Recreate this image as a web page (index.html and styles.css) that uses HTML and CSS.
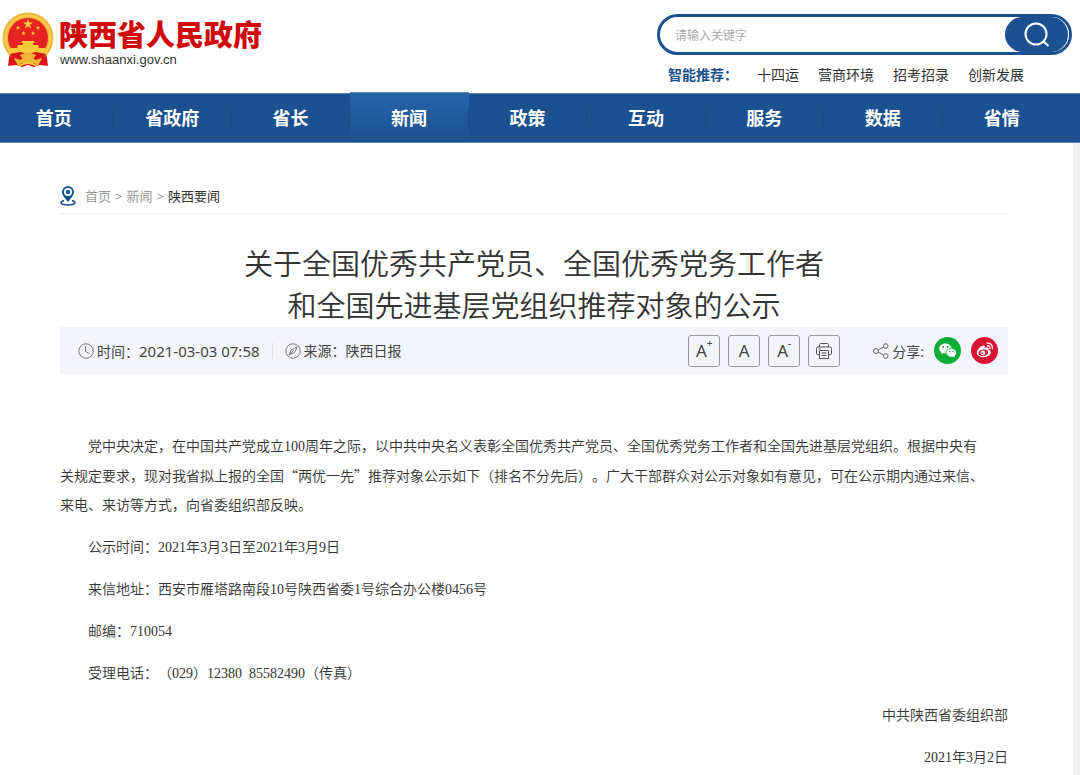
FILE: index.html
```html
<!DOCTYPE html>
<html lang="zh-CN">
<head>
    <meta charset="UTF-8">
    <meta name="viewport" content="width=device-width, initial-scale=1.0">
    <title>关于全国优秀共产党员、全国优秀党务工作者和全国先进基层党组织推荐对象的公示</title>
    <link rel="stylesheet" href="styles.css">
</head>
<body>
    <header class="header">
        <a class="logo" href="#">
            <svg class="emblem" viewBox="0 0 52 56" aria-hidden="true">
                <path d="M8 38 L6 54 L14 53 L20 55 L26 53 L32 55 L38 53 L46 54 L44 38 Z" fill="#d8151b"/>
                <circle cx="26" cy="26" r="25.500" fill="#f0b436"/>
                <circle cx="26" cy="26" r="22.500" fill="none" stroke="#f8cf50" stroke-width="2"/>
                <circle cx="26" cy="26" r="20" fill="#e5231f"/>
                <path d="M26 7 l1.300 3.400 3.700 .1 -2.900 2.300 1 3.600 -3.100 -2.100 -3.100 2.100 1 -3.600 -2.900 -2.300 3.700 -.1z" fill="#f8c93b"/>
                <path d="M16 13.500l.6 1.500 1.600.1-1.200 1 .4 1.600-1.400-.9-1.400.9.4-1.600-1.200-1 1.600-.1zM36 13.500l.6 1.500 1.600.1-1.200 1 .4 1.600-1.400-.9-1.400.9.4-1.600-1.200-1 1.600-.1zM21.500 19l.6 1.500 1.600.1-1.200 1 .4 1.600-1.400-.9-1.400.9.4-1.600-1.200-1 1.600-.1zM31 19l.6 1.500 1.600.1-1.200 1 .4 1.600-1.400-.9-1.400.9.4-1.600-1.200-1 1.600-.1z" fill="#f8c93b"/>
                <path d="M20 29h12l1 2h-2v2h5l1 3H15l1-3h5v-2h-2z" fill="#f8c93b"/>
                <path d="M8 36h36l-4 7H12z" fill="#f8c93b"/>
                <path d="M8 42l10-2 8 2 8-2 10 2-2 5-8 1-8-3-8 3-8-1z" fill="#d8151b"/>
                <path d="M18 43l8-3 8 3-4 6h-8z" fill="#f0b436"/>
                <path d="M12 46l10 3-6 5zM40 46l-10 3 6 5z" fill="#f0b436"/>
                <path d="M17 54q9-6 18 0" fill="none" stroke="#f8c93b" stroke-width="2"/>
            </svg>
            <span class="logo-text">
                <strong>陕西省人民政府</strong>
                <span class="domain">www.shaanxi.gov.cn</span>
            </span>
        </a>
        <div class="header-right">
            <form class="search">
                <input type="text" placeholder="请输入关键字" aria-label="搜索">
                <button type="button" aria-label="搜索">
                    <svg width="26" height="26" viewBox="0 0 26 26" fill="none" stroke="#fff" stroke-width="2">
                        <circle cx="12" cy="12" r="10.500"/>
                        <path d="M19 19l5.500 5"/>
                    </svg>
                </button>
            </form>
            <div class="hot">
                <strong>智能推荐：</strong>
                <a href="#">十四运</a>
                <a href="#">营商环境</a>
                <a href="#">招考招录</a>
                <a href="#">创新发展</a>
            </div>
        </div>
    </header>

    <nav class="nav">
        <ul>
            <li><a href="#">首页</a></li>
            <li><a href="#">省政府</a></li>
            <li><a href="#">省长</a></li>
            <li class="active"><a href="#">新闻</a></li>
            <li><a href="#">政策</a></li>
            <li><a href="#">互动</a></li>
            <li><a href="#">服务</a></li>
            <li><a href="#">数据</a></li>
            <li><a href="#">省情</a></li>
        </ul>
    </nav>

    <main class="main">
        <div class="crumbs">
            <svg width="16" height="20" viewBox="0 0 16 20" aria-hidden="true">
                <path d="M4 14.500C2 15 1 15.800 1 16.600 1 18 4 19 8 19s7-1 7-2.400c0-.8-1-1.600-3-2.100" fill="none" stroke="#1b5190" stroke-width="1.600"/>
                <path d="M8 0a6 6 0 0 0-6 6c0 3 2.500 5.500 6 10 3.500-4.500 6-7 6-10a6 6 0 0 0-6-6z" fill="#1b5190"/>
                <circle cx="8" cy="6" r="4" fill="#fff"/>
                <circle cx="8" cy="6" r="2.200" fill="#1b5190"/>
            </svg>
            <a href="#">首页</a>
            <span>&gt;</span>
            <a href="#">新闻</a>
            <span>&gt;</span>
            <a class="current" href="#">陕西要闻</a>
        </div>

        <h1>关于全国优秀共产党员、全国优秀党务工作者<br>和全国先进基层党组织推荐对象的公示</h1>

        <div class="info">
            <div class="info-item">
                <svg width="16" height="16" viewBox="0 0 16 16" fill="none" stroke="#777" aria-hidden="true">
                    <circle cx="8" cy="8" r="7.200"/>
                    <path d="M7.500 3v5.500l4 2"/>
                </svg>
                <span>时间：<time>2021-03-03 07:58</time></span>
            </div>
            <div class="info-item source">
                <svg width="16" height="16" viewBox="0 0 16 16" fill="none" stroke="#777" aria-hidden="true">
                    <circle cx="8" cy="8" r="7.200"/>
                    <path d="M12 4L6 7l-2 5 6-3zM4 12l5-5"/>
                </svg>
                <span>来源：陕西日报</span>
            </div>
            <div class="tools">
                <button type="button" aria-label="放大字体">A<sup>+</sup></button>
                <button type="button" aria-label="默认字体">A</button>
                <button type="button" aria-label="缩小字体">A<sup>-</sup></button>
                <button type="button" aria-label="打印">
                    <svg width="16" height="16" viewBox="0 0 16 16" fill="none" stroke="#555">
                        <path d="M3.500 4V1.500Q3.500.5 4.500.5h7q1 0 1 1V4M3.500 11.500h-2q-1 0-1-1v-5q0-1.500 1.500-1.500h12q1.500 0 1.500 1.500v5q0 1-1 1h-2"/>
                        <path d="M3.500 7.500h9v8h-9zM5.500 10h5M5.500 12.500h5M2.500 6h2"/>
                    </svg>
                </button>
            </div>
            <div class="share">
                <svg width="16" height="16" viewBox="0 0 16 16" fill="none" stroke="#666" aria-hidden="true">
                    <circle cx="3" cy="8" r="2.500"/>
                    <circle cx="12.800" cy="3" r="2.300"/>
                    <circle cx="12.800" cy="13" r="2.300"/>
                    <path d="M5.300 6.800l5.400-2.800M5.300 9.200l5.400 2.800"/>
                </svg>
                <span>分享:</span>
                <a href="#" aria-label="微信">
                    <svg width="27" height="27" viewBox="0 0 27 27">
                        <circle cx="13.500" cy="13.500" r="13.500" fill="#0cae35"/>
                        <path d="M11.500 6.500c-3.600 0-6.300 2.200-6.300 5 0 1.600.9 3 2.300 3.900L7 17.300l2.300-1.200c.8.2 1.500.3 2.300.3 0-3.200 2.600-5.200 6-5.200-.5-2.700-3-4.700-6.100-4.700z" fill="#fff"/>
                        <path d="M22.300 15.700c0-2.200-2.200-4-4.900-4s-4.900 1.800-4.900 4 2.200 4 4.900 4c.6 0 1.200-.1 1.700-.3l1.900 1-.5-1.600c1.100-.7 1.800-1.900 1.800-3.100z" fill="#fff"/>
                        <g fill="#0cae35"><circle cx="9.300" cy="10" r=".9"/><circle cx="13.600" cy="10" r=".9"/><circle cx="15.800" cy="14.500" r=".7"/><circle cx="19" cy="14.500" r=".7"/></g>
                    </svg>
                </a>
                <a href="#" aria-label="微博">
                    <svg width="27" height="27" viewBox="0 0 27 27">
                        <circle cx="13.500" cy="13.500" r="13.500" fill="#dc1232"/>
                        <path d="M17.500 12.600c.7-1.900-.6-2.800-3.500-1.700.7-2-.8-2.900-3-1.900-2.600 1.200-5.200 4.200-5.200 6.700 0 2.600 3 4.500 6.700 4.500 4.300 0 7.300-2.400 7.300-4.700 0-1.500-1-2.400-2.300-2.900z" fill="#fff"/>
                        <ellipse cx="12.300" cy="15.700" rx="4.900" ry="3.300" fill="#dc1232" transform="rotate(-8 12.300 15.700)"/>
                        <circle cx="11.800" cy="15.900" r="2.400" fill="#fff"/>
                        <circle cx="11.200" cy="16.300" r=".9" fill="#dc1232"/>
                        <path d="M16 6.200c3.400-.7 6.200 2 5.300 5.700M16.500 8.800c1.600-.3 2.800.8 2.400 2.500" fill="none" stroke="#fff" stroke-width="1.300" stroke-linecap="round"/>
                    </svg>
                </a>
            </div>
        </div>

        <article class="content">
            <p>党中央决定，在中国共产党成立100周年之际，以中共中央名义表彰全国优秀共产党员、全国优秀党务工作者和全国先进基层党组织。根据中央有<br>关规定要求，现对我省拟上报的全国<span class="quoted">“两优一先”</span>推荐对象公示如下（排名不分先后）。广大干部群众对公示对象如有意见，可在公示期内通过来信、<br>来电、来访等方式，向省委组织部反映。</p>
            <p>公示时间：2021年3月3日至2021年3月9日</p>
            <p>来信地址：西安市雁塔路南段10号陕西省委1号综合办公楼0456号</p>
            <p>邮编：710054</p>
            <p>受理电话：（029）12380&nbsp;&nbsp;85582490（传真）</p>
            <p class="sign">中共陕西省委组织部</p>
            <p class="sign">2021年3月2日</p>
        </article>
    </main>
</body>
</html>
```

FILE: styles.css
```css
* {
    box-sizing: border-box;
}
body {
    margin: 0;
    min-height: 100vh;
    display: flex;
    flex-direction: column;
    background: #fff;
    color: #333;
    font-family: "Noto Sans", "Noto Sans CJK SC", sans-serif;
    font-size: 14px;
    text-spacing-trim: space-all;
}
a {
    color: inherit;
    text-decoration: none;
}
svg {
    display: block;
    flex: none;
}
button {
    padding: 0;
    font-family: inherit;
    color: inherit;
    cursor: pointer;
}

/* header */
.header {
    display: flex;
    justify-content: space-between;
    height: 93px;
    padding: 0 8px 0 2px;
}
.logo {
    display: flex;
    align-items: flex-start;
    gap: 5px;
    padding-top: 12px;
}
.emblem {
    width: 52px;
    height: 56px;
}
.logo-text {
    display: flex;
    flex-direction: column;
    padding-top: 7px;
}
.logo-text strong {
    color: #d00a0a;
    font-family: "Liberation Sans", "Noto Sans CJK SC", sans-serif;
    font-size: 29px;
    font-weight: 900;
    line-height: 34px;
}
.domain {
    padding-left: 1px;
    font-family: "Liberation Sans", sans-serif;
    font-size: 13px;
    line-height: 14px;
}
.header-right {
    width: 415px;
    padding-top: 14px;
}
.search {
    display: flex;
    height: 41px;
    border: 3px solid #1b5190;
    border-radius: 21px;
}
.search input {
    flex: 1;
    min-width: 0;
    padding: 0 0 0 15px;
    border: 0;
    background: none;
    outline: none;
    font-family: "Noto Sans CJK SC", sans-serif;
    font-size: 12px;
}
.search input::placeholder {
    color: #aaa;
}
.search button {
    display: flex;
    align-items: center;
    justify-content: center;
    width: 64px;
    border: 0;
    border-right: 1px solid #fff;
    border-radius: 18px;
    background: #1b5190;
}
.hot {
    display: flex;
    gap: 19px;
    padding: 9px 0 0 11px;
    line-height: 22px;
}
.hot strong {
    color: #1b5190;
}

/* navigation */
.nav {
    height: 50px;
    border-top: 1px solid #5c83b3;
    border-bottom: 1px solid #5c83b3;
    background: #1b5190;
}
.nav ul {
    display: flex;
    margin: 0 19px 0 -5px;
    padding: 0;
    list-style: none;
}
.nav li {
    flex: 1;
    display: flex;
    align-items: center;
    height: 48px;
}
.nav a {
    flex: 1;
    border-right: 1px solid #1a4a84;
    color: #fff;
    font-size: 18px;
    font-weight: bold;
    line-height: 18px;
    text-align: center;
}
.nav li:last-child a {
    border-right: 0;
}
.nav .active {
    height: 50px;
    margin-top: -2px;
    border-top: 1px solid #5c83b3;
    background: linear-gradient(#2862a8, #1b5190);
}

/* article page */
.main {
    flex: 1;
    padding: 42px 65px 0 60px;
    border-right: 7px solid #f0f0f0;
}
.crumbs {
    display: flex;
    align-items: center;
    gap: 4px;
    height: 29px;
    padding-bottom: 7px;
    border-bottom: 1px solid #eee;
    color: #999;
    font-size: 13px;
    line-height: 18px;
}
.crumbs svg {
    margin-right: 5px;
}
.crumbs .current {
    color: #333;
}
h1 {
    margin: 29px 0 0;
    font-size: 29px;
    font-weight: 350;
    line-height: 42px;
    text-align: center;
}
.info {
    display: flex;
    align-items: center;
    height: 47px;
    padding: 0 10px 0 18px;
    background: #f4f5fb;
    color: #444;
}
.info-item {
    display: flex;
    align-items: center;
    gap: 3px;
}
.info-item time {
    font-size: 15px;
}
.source {
    margin-left: 12px;
    padding-left: 12px;
    border-left: 1px solid #ddd;
    line-height: 15px;
}
.tools {
    display: flex;
    gap: 8px;
    margin-left: auto;
}
.tools button {
    display: flex;
    align-items: center;
    justify-content: center;
    width: 32px;
    height: 32px;
    border: 1px solid #999;
    border-radius: 3px;
    background: none;
    font-size: 17px;
}
.tools sup {
    align-self: flex-start;
    font-size: 10px;
}
.share {
    display: flex;
    align-items: center;
    margin-left: 33px;
}
.share span {
    margin-left: 3px;
}
.share a {
    margin-left: 10px;
}

/* notice text */
.content {
    padding-top: 58px;
    font-family: "Liberation Serif", "Noto Sans CJK SC", serif;
    font-weight: 350;
    line-height: 29px;
}
.content p {
    margin: 0 0 13px;
    text-indent: 2em;
}
.content p:last-child {
    margin-bottom: 0;
}
.quoted {
    font-family: "Noto Sans CJK SC", sans-serif;
}
.content .sign {
    text-align: right;
    text-indent: 0;
}
```
